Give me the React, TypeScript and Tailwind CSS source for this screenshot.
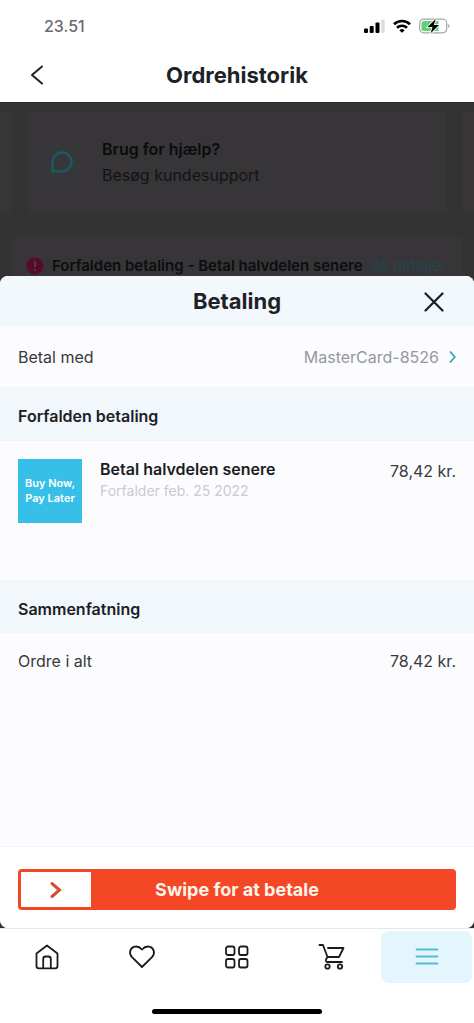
import type { ReactNode } from 'react'

const card = 'MasterCard-8526'
const amount = '78,42 kr.'

function StatusBar() {
  return (
    <div className="flex h-[52px] items-center justify-between pl-11 pr-6">
      <span className="text-base font-medium text-[#6b6b6d]">23.51</span>
      <div className="flex items-center gap-2">
        <svg aria-hidden="true" viewBox="0 0 21 14" className="h-[14px] w-[21px]">
          <rect x="0" y="9.5" width="4" height="4.5" rx="1" />
          <rect x="5.7" y="7" width="4" height="7" rx="1" />
          <rect x="11.5" y="3.5" width="4" height="10.5" rx="1" />
          <rect x="17.2" y="0.5" width="3.5" height="13.5" rx="1" fill="#dcdcdc" />
        </svg>
        <svg aria-hidden="true" viewBox="0 0 18 14" className="h-[14px] w-[18px]" fill="none" stroke="#000" strokeWidth="2.6">
          <path d="M1 5.2a11.5 11.5 0 0 1 16 0" />
          <path d="M4 8.8a7.2 7.2 0 0 1 10 0" />
          <path d="M9 13.8 6.4 11.4a3.7 3.7 0 0 1 5.2 0Z" fill="#000" stroke="none" />
        </svg>
        <svg aria-hidden="true" viewBox="0 0 31 16" className="h-4 w-[31px]">
          <rect x="0.7" y="1.2" width="27" height="13.6" rx="4" fill="#fff" stroke="#a5a5a5" strokeWidth="1.2" />
          <path d="M29.2 6v4c1.8-.6 1.8-3.4 0-4Z" fill="#a5a5a5" />
          <path d="M5 3h14.5v10H5a2.5 2.5 0 0 1-2.5-2.5v-5A2.5 2.5 0 0 1 5 3Z" fill="#5fd07b" />
          <path d="M16.8.8 8.5 9h5L11.7 15.2 20 7h-5.2Z" stroke="#fff" strokeWidth="1.6" paintOrder="stroke" />
        </svg>
      </div>
    </div>
  )
}

function PageHeader() {
  return (
    <header className="grid h-[50px] grid-cols-[74px_1fr_74px] items-center pb-1">
      <button aria-label="Tilbage" className="flex h-10 items-center pl-[30px]">
        <svg aria-hidden="true" viewBox="0 0 14 20" className="h-5 w-[14px]" fill="none" stroke="#1f2428" strokeWidth="2" strokeLinecap="round" strokeLinejoin="round">
          <path d="M12 1.5 2 10l10 8.5" />
        </svg>
      </button>
      <h1 className="text-center text-[22px] font-bold text-[#1d2228]">Ordrehistorik</h1>
    </header>
  )
}

function OrderHistory() {
  return (
    <section className="h-[174px] overflow-hidden border-t border-[#29292a] pt-2">
      <div className="grid grid-cols-[12px_1fr_12px] gap-4">
        <div className="bg-[#373536]" />
        <div className="flex h-[102px] items-center gap-[22px] bg-[#373537] pl-4">
          <div className="flex h-9 w-9 items-center justify-center bg-[#353739]">
            <svg aria-hidden="true" viewBox="0 0 22 22" className="h-[22px] w-[22px]" fill="none" stroke="#1d5964" strokeWidth="2.4" strokeLinejoin="round">
              <path d="M1.5 20.5V11a9.5 9.5 0 1 1 9.5 9.5Z" />
            </svg>
          </div>
          <div className="text-base leading-[26px]">
            <p className="font-semibold text-[#0b0b0d]">Brug for hjælp?</p>
            <p className="text-[#131315]">Besøg kundesupport</p>
          </div>
        </div>
        <div className="bg-[#373536]" />
      </div>
      <div className="mx-3 mt-6 flex items-center gap-2 whitespace-nowrap bg-[#373537] pb-4 pl-[14px] pr-3 pt-[18px] text-[15px]">
        <svg aria-hidden="true" viewBox="0 0 18 18" className="h-[18px] w-[18px] shrink-0">
          <circle cx="9" cy="9" r="8.5" fill="#570a29" />
          <path d="M9 4v6M9 12v2" stroke="#51393f" strokeWidth="2" />
        </svg>
        <p className="font-semibold text-[#0d0d0f]">Forfalden betaling - Betal halvdelen senere</p>
        <a href="#detaljer" className="text-[#23464e]">Se detaljer</a>
      </div>
    </section>
  )
}

function SectionTitle({ children }: Readonly<{ children: ReactNode }>) {
  return (
    <h3 className="flex h-[53px] items-center bg-[#f1f7fb] px-[18px] pt-1 text-base font-semibold text-[#1b2026]">{children}</h3>
  )
}

function PaymentSheet() {
  return (
    <section role="dialog" aria-labelledby="sheet-title" className="flex flex-1 flex-col overflow-hidden rounded-lg bg-[#fcfcff] text-base text-[#37393d]">
      <div className="grid h-[51px] grid-cols-[74px_1fr_74px] items-center bg-[#f3f8fc]">
        <h2 id="sheet-title" className="col-start-2 text-center text-[22px] font-bold text-[#1d2228]">Betaling</h2>
        <button aria-label="Luk" className="flex h-10 items-center pl-6">
          <svg aria-hidden="true" viewBox="0 0 20 20" className="h-5 w-5" fill="none" stroke="#1a1e22" strokeWidth="2.2" strokeLinecap="round">
            <path d="m1.5 1.5 17 17M18.5 1.5l-17 17" />
          </svg>
        </button>
      </div>

      <button className="flex h-[60px] items-center justify-between px-[18px] text-left">
        <span>Betal med</span>
        <span className="flex items-center gap-[10px] text-[#93999f]">
          {card}
          <svg aria-hidden="true" viewBox="0 0 7 12" className="h-3 w-[7px]" fill="none" stroke="#35a5c4" strokeWidth="1.8">
            <path d="m1 .5 4.800 5.500L1 11.500" />
          </svg>
        </span>
      </button>

      <SectionTitle>Forfalden betaling</SectionTitle>
      <div className="flex h-[140px] items-start gap-[18px] border-t border-[#f1f2f6] px-[18px] pt-[18px]">
        <div className="flex h-16 w-16 shrink-0 items-center justify-center bg-[#36bfe7] text-center text-[11px] font-semibold leading-[15px] text-white">
          Buy Now,<br />Pay Later
        </div>
        <div className="flex-1">
          <p className="font-semibold leading-5 text-[#191b1f]">Betal halvdelen senere</p>
          <p className="text-sm leading-6 text-[#c9cbd1]">Forfalder feb. 25 2022</p>
        </div>
        <span>{amount}</span>
      </div>

      <SectionTitle>Sammenfatning</SectionTitle>
      <div className="flex h-[55px] items-center justify-between px-[18px]">
        <span>Ordre i alt</span>
        <span>{amount}</span>
      </div>

      <div className="mt-auto border-t border-[#f3f4f8] bg-white px-[18px] pb-[18px] pt-[22px]">
        <button className="grid h-[41px] w-full grid-cols-[70px_1fr_70px] items-center rounded bg-[#f44725] p-[3px] text-white">
          <span className="flex h-full items-center justify-center bg-white">
            <svg aria-hidden="true" viewBox="0 0 12 18" className="h-[18px] w-3" fill="none" stroke="#d84b34" strokeWidth="3" strokeLinecap="round">
              <path d="m2 2.5 7.5 6.5L2 15.5" />
            </svg>
          </span>
          <span className="text-lg font-bold text-[#fff4e8]">Swipe for at betale</span>
        </button>
      </div>
    </section>
  )
}

function NavIcon({ children }: Readonly<{ children: ReactNode }>) {
  return (
    <svg aria-hidden="true" viewBox="0 0 28 28" className="h-7 w-7" fill="none" stroke="currentColor" strokeWidth="1.8" strokeLinecap="round" strokeLinejoin="round">
      {children}
    </svg>
  )
}

function TabBar() {
  const tabs = [
    {
      label: 'Hjem',
      icon: <path d="M3.5 10.5 14 2.5l10.5 8V23a2.3 2.3 0 0 1-2.3 2.3H5.8A2.3 2.3 0 0 1 3.5 23ZM10.2 25V16a2.5 2.5 0 0 1 2.5-2.5h2.6a2.5 2.5 0 0 1 2.5 2.5v9" />
    },
    {
      label: 'Favoritter',
      icon: <path d="M14 24 4 14.200C.5 10.500 2 5.400 5.800 3.900c3-1 5.700-.2 8.200 2.600 2.500-2.800 5.200-3.600 8.200-2.600 3.800 1.500 5.300 6.600 1.800 10.300Z" />
    },
    {
      label: 'Kategorier',
      icon: (
        <>
          <rect x="3" y="3.5" width="8.5" height="8.5" rx="2" />
          <rect x="16" y="3.5" width="8.5" height="8.5" rx="2" />
          <rect x="3" y="16" width="8.5" height="8.5" rx="2" />
          <rect x="16" y="16" width="8.5" height="8.5" rx="2" />
        </>
      )
    },
    {
      label: 'Kurv',
      icon: (
        <>
          <path d="M1.5 2H5l4.5 12h11.500L25.500 5H10M9.500 14 8 16.500c-.5 1.500.2 2.500 1.200 2.500H24" />
          <circle cx="9.5" cy="23.5" r="2.200" />
          <circle cx="22" cy="23.5" r="2.200" />
        </>
      )
    },
    { label: 'Menu', icon: <path d="M3.5 6.5h21M3.5 13.5h21M3.5 20.5h21" /> }
  ]

  return (
    <footer className="border-t border-[#e6e7ea] bg-white pt-[2px]">
      <nav className="grid grid-cols-5">
        {tabs.map(({ label, icon }) => (
          <button
            key={label}
            aria-label={label}
            className={`mx-[2px] flex h-[52px] items-center justify-center rounded-lg ${label === 'Menu' ? 'bg-[#e3f6fe] text-[#55bcd6]' : 'text-[#1b1c20]'}`}
          >
            <NavIcon>{icon}</NavIcon>
          </button>
        ))}
      </nav>
      <div className="mx-auto mb-[9px] mt-[26px] h-[5px] w-[170px] rounded-full bg-black" />
    </footer>
  )
}

function App() {
  return (
    <div className="flex min-h-screen flex-col bg-white font-['Inter',sans-serif]">
      <StatusBar />
      <PageHeader />
      <main className="flex flex-1 flex-col bg-[#333334]">
        <OrderHistory />
        <PaymentSheet />
      </main>
      <TabBar />
    </div>
  )
}

export default App
